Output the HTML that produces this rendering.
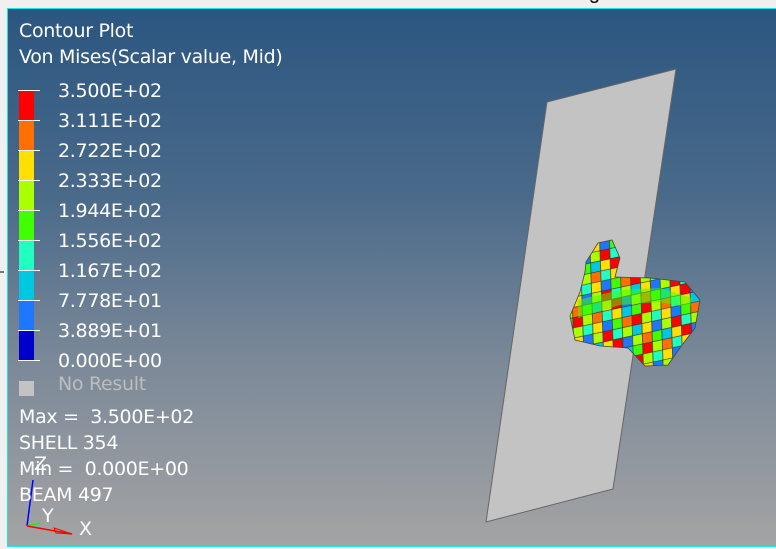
<!DOCTYPE html>
<html><head><style>
body{margin:0;width:776px;height:549px;background:#f0f0f0;position:relative;overflow:hidden;font-family:"DejaVu Sans","Liberation Sans",sans-serif;}
#top{position:absolute;left:570px;top:-18px;font:20px "Liberation Sans",sans-serif;color:#000;white-space:nowrap}
#vp{position:absolute;left:7px;top:8px;width:769px;height:539px;box-sizing:border-box;border:1px solid #19e6e6;border-right:none;background:linear-gradient(#2b5680 0%,#4a6a8a 35%,#7a8898 65%,#a4a4a4 100%);}
.t{position:absolute;color:#fff;font-size:19px;white-space:nowrap;letter-spacing:-0.3px;line-height:22px}
</style></head><body>
<div id="top">Rigid Wall : wall 1</div>
<div id="vp"></div>
<svg width="776" height="549" style="position:absolute;left:0;top:0">
<defs>
<pattern id="m" width="70" height="40" patternUnits="userSpaceOnUse" patternTransform="rotate(-12) skewX(-10)">
<g stroke="#333" stroke-width="0.6">
<rect x="0" y="0" width="10" height="10" fill="#ff0000"/><rect x="10" y="0" width="10" height="10" fill="#aaff00"/><rect x="20" y="0" width="10" height="10" fill="#20ffc0"/><rect x="30" y="0" width="10" height="10" fill="#ffe000"/><rect x="40" y="0" width="10" height="10" fill="#1e78ff"/><rect x="50" y="0" width="10" height="10" fill="#40ff00"/><rect x="60" y="0" width="10" height="10" fill="#ff7000"/>
<rect x="0" y="10" width="10" height="10" fill="#00c8e0"/><rect x="10" y="10" width="10" height="10" fill="#ffe000"/><rect x="20" y="10" width="10" height="10" fill="#1e78ff"/><rect x="30" y="10" width="10" height="10" fill="#aaff00"/><rect x="40" y="10" width="10" height="10" fill="#ff0000"/><rect x="50" y="10" width="10" height="10" fill="#20ffc0"/><rect x="60" y="10" width="10" height="10" fill="#aaff00"/>
<rect x="0" y="20" width="10" height="10" fill="#aaff00"/><rect x="10" y="20" width="10" height="10" fill="#ff7000"/><rect x="20" y="20" width="10" height="10" fill="#40ff00"/><rect x="30" y="20" width="10" height="10" fill="#00c8e0"/><rect x="40" y="20" width="10" height="10" fill="#ffe000"/><rect x="50" y="20" width="10" height="10" fill="#ff0000"/><rect x="60" y="20" width="10" height="10" fill="#1e78ff"/>
<rect x="0" y="30" width="10" height="10" fill="#40ff00"/><rect x="10" y="30" width="10" height="10" fill="#ff0000"/><rect x="20" y="30" width="10" height="10" fill="#aaff00"/><rect x="30" y="30" width="10" height="10" fill="#ff7000"/><rect x="40" y="30" width="10" height="10" fill="#20ffc0"/><rect x="50" y="30" width="10" height="10" fill="#ffe000"/><rect x="60" y="30" width="10" height="10" fill="#00c8e0"/>
</g></pattern>
</defs>
<polygon points="547,102 676,69 613,489 486,522" fill="#c3c3c3" stroke="#666" stroke-width="1"/>
<polygon points="586,262 598,243 612,240 620,258 615,277 650,278 685,282 700,300 695,328 682,345 668,365 645,366 628,348 600,346 575,340 570,316 580,292 585,272" fill="url(#m)" stroke="#444" stroke-width="0.8"/>
<polygon points="578,300 620,290 660,288 692,298 690,308 660,302 620,305 578,318" fill="#40ff00" opacity="0.5"/>
<g>
<rect x="19" y="91" width="15" height="30" fill="#ff0000"/>
<rect x="19" y="121" width="15" height="30" fill="#ff7000"/>
<rect x="19" y="151" width="15" height="30" fill="#ffe000"/>
<rect x="19" y="181" width="15" height="30" fill="#aaff00"/>
<rect x="19" y="211" width="15" height="30" fill="#40ff00"/>
<rect x="19" y="241" width="15" height="30" fill="#20ffc0"/>
<rect x="19" y="271" width="15" height="30" fill="#00c8e0"/>
<rect x="19" y="301" width="15" height="30" fill="#1e78ff"/>
<rect x="19" y="331" width="15" height="30" fill="#0000cc"/>
<g stroke="#fff" stroke-width="1">
<line x1="18" y1="90.5" x2="40" y2="90.5"/><line x1="18" y1="120.5" x2="40" y2="120.5"/><line x1="18" y1="150.5" x2="40" y2="150.5"/><line x1="18" y1="180.5" x2="40" y2="180.5"/><line x1="18" y1="210.5" x2="40" y2="210.5"/><line x1="18" y1="240.5" x2="40" y2="240.5"/><line x1="18" y1="270.5" x2="40" y2="270.5"/><line x1="18" y1="300.5" x2="40" y2="300.5"/><line x1="18" y1="330.5" x2="40" y2="330.5"/><line x1="18" y1="360.5" x2="40" y2="360.5"/>
</g>
<rect x="19" y="381" width="15" height="15" fill="#c3c3c3"/>
</g>
<g stroke-width="1.5">
<line x1="27" y1="526" x2="33" y2="480" stroke="#0000ff"/>
<line x1="27" y1="526" x2="40" y2="523" stroke="#00ff00"/>
<line x1="27" y1="526" x2="72" y2="534" stroke="#ff0000"/>
</g>
<polygon points="54,528 72,534 56,533" fill="none" stroke="#ff0000"/>
<line x1="0" y1="272" x2="4" y2="272" stroke="#000"/>
</svg>
<div class="t" style="left:19px;top:20px">Contour Plot</div>
<div class="t" style="left:19px;top:46px">Von Mises(Scalar value, Mid)</div>
<div class="t" style="left:58px;top:80px">3.500E+02</div>
<div class="t" style="left:58px;top:110px">3.111E+02</div>
<div class="t" style="left:58px;top:140px">2.722E+02</div>
<div class="t" style="left:58px;top:170px">2.333E+02</div>
<div class="t" style="left:58px;top:200px">1.944E+02</div>
<div class="t" style="left:58px;top:230px">1.556E+02</div>
<div class="t" style="left:58px;top:260px">1.167E+02</div>
<div class="t" style="left:58px;top:290px">7.778E+01</div>
<div class="t" style="left:58px;top:320px">3.889E+01</div>
<div class="t" style="left:58px;top:350px">0.000E+00</div>
<div class="t" style="left:58px;top:373px;color:#bdbdbd">No Result</div>
<div class="t" style="left:19px;top:406px">Max =&nbsp; 3.500E+02</div>
<div class="t" style="left:19px;top:432px">SHELL 354</div>
<div class="t" style="left:19px;top:458px">Min =&nbsp; 0.000E+00</div>
<div class="t" style="left:19px;top:484px">BEAM 497</div>
<div class="t" style="left:34px;top:453px">Z</div>
<div class="t" style="left:42px;top:505px">Y</div>
<div class="t" style="left:79px;top:518px">X</div>
</body></html>
